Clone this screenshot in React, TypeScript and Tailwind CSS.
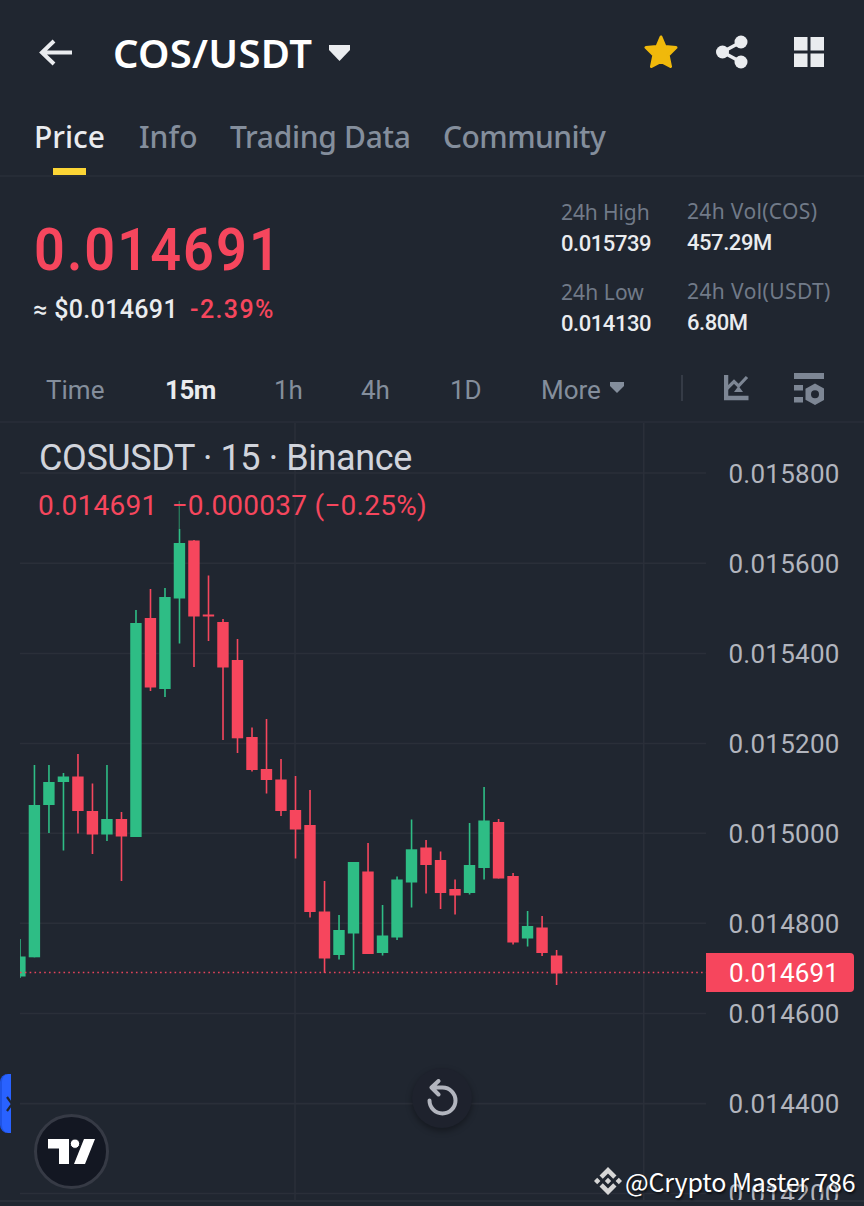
type Candle = { up: boolean; high: number; top: number; bottom: number; low: number };

const c = (up: boolean, high: number, top: number, bottom: number, low: number): Candle => ({ up, high, top, bottom, low });

const candles: Candle[] = [
  c(true, 939, 956.5, 976.5, 978),
  c(true, 765, 805, 957.3, 957.3),
  c(true, 765, 782, 805, 833),
  c(true, 773, 776.5, 782, 850.5),
  c(false, 754, 776.5, 811, 833.5),
  c(false, 783.5, 811, 834.5, 854),
  c(true, 765, 819, 834.5, 841),
  c(false, 812, 819, 836.5, 881),
  c(true, 610, 623, 837, 837),
  c(false, 589, 618, 687.5, 691),
  c(true, 588, 597, 689, 697),
  c(true, 529, 543, 598.5, 643.5),
  c(false, 540, 540.5, 616.5, 667),
  c(false, 575.5, 614.5, 616.5, 641),
  c(false, 619, 622, 667.5, 740),
  c(false, 639, 660, 738.3, 753),
  c(false, 727.5, 737, 770, 771.5),
  c(false, 719, 769, 780, 793.5),
  c(false, 759, 779.5, 811, 816),
  c(false, 776, 810, 829.5, 858.5),
  c(false, 790, 825, 912, 917.5),
  c(false, 881, 911.5, 958.5, 973),
  c(true, 915, 930, 955, 959.5),
  c(true, 862, 862, 933.5, 970),
  c(false, 843, 871.5, 954, 954),
  c(true, 905, 935.5, 953, 955.5),
  c(true, 876.5, 879.5, 937.5, 940),
  c(true, 819.5, 849.3, 882.5, 907.5),
  c(false, 840, 847.5, 865, 893.5),
  c(false, 851.5, 860, 893, 909),
  c(false, 879.5, 889, 895.5, 914.5),
  c(true, 823, 865, 893, 894.5),
  c(true, 787, 820.5, 868, 879.5),
  c(false, 819, 822, 878.5, 878.5),
  c(false, 873, 876, 942.5, 944.5),
  c(true, 911, 926, 938.5, 946.5),
  c(false, 916, 927.5, 953, 956),
  c(false, 950, 955.5, 973.5, 985),
];

const gridRows = [473, 563.3, 653.5, 743.5, 833.3, 923.3, 1013.5, 1103.6, 1193.5];
const axisLabels = ["0.015800", "0.015600", "0.015400", "0.015200", "0.015000", "0.014800", "0.014600", "0.014400", "0.014200"];

function Chart() {
  return (
    <svg className="block h-[785px] w-[706px]" viewBox="0 421 706 785">
      <g stroke="#2a2f39" strokeWidth="1.6">
        {gridRows.map((y) => (
          <line key={y} x1="20" x2="706" y1={y} y2={y} />
        ))}
        <line x1="295" x2="295" y1="421" y2="1200" />
        <line x1="643.7" x2="643.7" y1="421" y2="1200" />
      </g>
      <clipPath id="plot">
        <rect x="20" y="421" width="686" height="785" />
      </clipPath>
      <g clipPath="url(#plot)">
        <rect x="178.6" y="501" width="1.4" height="28" fill="#287358" />
        {candles.map((k, i) => {
          const x = 19.9 + i * 14.504;
          return (
            <g key={i} fill={k.up ? "#2ebd85" : "#f6465d"}>
              <rect x={x - 0.75} y={k.high} width="1.6" height={k.low - k.high} />
              <rect x={x - 5.7} y={k.top} width="11.4" height={k.bottom - k.top} />
            </g>
          );
        })}
      </g>
      <line x1="20" x2="706" y1="972.5" y2="972.5" stroke="#e8445b" strokeWidth="1.7" strokeDasharray="1.6 3.23" />
    </svg>
  );
}

function Header() {
  return (
    <header className="flex h-[105px] items-center pl-[39px] pr-[40px]">
      <svg className="h-[28px] w-[34px]" viewBox="0 0 34 28" fill="none" stroke="#eaecef" strokeWidth="4">
        <path d="M33 13.5H4M15 2 3 13.5 15 25" />
      </svg>
      <h1 className="ml-[40px] w-[202px] whitespace-nowrap font-['Noto_Sans',sans-serif] text-[40px] font-semibold leading-[48px] tracking-[0.3px] text-white">COS/USDT</h1>
      <svg className="ml-[14px] h-[16px] w-[21px]" viewBox="0 0 21 16" fill="#eaecef">
        <path d="M0 0h21v5L10.500 16 0 5z" />
      </svg>
      <div className="-mt-px ml-auto flex items-center">
        <svg className="h-[36px] w-[34px]" viewBox="0 0 34 36" fill="#f0b90b" stroke="#f0b90b" strokeWidth="3" strokeLinejoin="round">
          <path d="M17 3 21 12.500 32 13.500 24.200 21.300 26.500 32.500 17 27.500 7.500 32.500 9.800 21.300 2 13.500 13 12.500z" />
        </svg>
        <svg className="ml-[38px] h-[34px] w-[32px]" viewBox="0 0 32 34" fill="#eaecef">
          <path d="M6.500 17 25 7M6.500 17 25 27" stroke="#eaecef" strokeWidth="3.600" />
          <circle cx="6.500" cy="17" r="6.500" />
          <circle cx="25" cy="7" r="6.500" />
          <circle cx="25" cy="27" r="6.500" />
        </svg>
        <svg className="ml-[46px] h-[30px] w-[30px]" viewBox="0 0 30 30" fill="#eaecef">
          <path d="M0 0h13.500v13.500H0zM16.500 0H30v13.500H16.500zM0 16.500h13.500V30H0zM16.500 16.500H30V30H16.500z" />
        </svg>
      </div>
    </header>
  );
}

function Tabs() {
  return (
    <nav className="flex h-[72px] border-b-2 border-[#262c36] pl-[34px] pt-[2px] font-['Noto_Sans',sans-serif] text-[30px] font-medium leading-[60px] text-[#848e9c]">
      <div className="flex w-[105px] flex-col text-[#eaecef]">
        <span className="h-[62px] whitespace-nowrap">Price</span>
        <span className="ml-[19px] h-[7px] w-[33px] shrink-0 bg-[#fcd535]" />
      </div>
      <span className="w-[91px] whitespace-nowrap">Info</span>
      <span className="w-[213px] whitespace-nowrap tracking-[-0.3px]">Trading Data</span>
      <span className="whitespace-nowrap tracking-[-0.55px]">Community</span>
    </nav>
  );
}

function Stat({ label, value, labelClass }: { label: string; value: string; labelClass: string }) {
  return (
    <div className="h-[80px] whitespace-nowrap">
      <div className={`font-['Noto_Sans',sans-serif] text-[21px] leading-[32px] text-[#717a88] ${labelClass}`}>{label}</div>
      <div className="font-[Roboto,sans-serif] text-[22px] font-medium leading-[32px] tracking-[-0.45px] text-[#eaecef]">{value}</div>
    </div>
  );
}

function Summary() {
  return (
    <section className="flex h-[171px]">
      <div className="w-[561px] whitespace-nowrap pl-[33px] pt-[37px] font-[Roboto,sans-serif]">
        <div className="ml-px origin-left scale-x-90 text-[60px] font-semibold leading-[72px] tracking-[2.3px] text-[#f6465d]">0.014691</div>
        <div className="flex text-[25px] font-medium leading-[48px] text-[#eaecef]">
          <span className="w-[157px] tracking-[0.35px]">≈ $0.014691</span>
          <span className="tracking-[1.4px] text-[#f6465d]">-2.39%</span>
        </div>
      </div>
      <div className="w-[126px] pt-[19px]">
        <Stat label="24h High" value="0.015739" labelClass="tracking-[-0.1px]" />
        <Stat label="24h Low" value="0.014130" labelClass="tracking-[0.1px]" />
      </div>
      <div className="pt-[18px]">
        <Stat label="24h Vol(COS)" value="457.29M" labelClass="tracking-[0.35px]" />
        <Stat label="24h Vol(USDT)" value="6.80M" labelClass="tracking-[0.4px]" />
      </div>
    </section>
  );
}

function Intervals() {
  return (
    <section className="flex h-[73px] pl-[46px] font-[Roboto,sans-serif] text-[26px] leading-[84px] text-[#848e9c]">
      <span className="w-[119px]">Time</span>
      <span className="w-[109px] font-bold tracking-[-0.5px] text-[#eaecef]">15m</span>
      <span className="w-[87px]">1h</span>
      <span className="w-[89px]">4h</span>
      <span className="w-[91px]">1D</span>
      <span className="w-[69px]">More</span>
      <svg className="mt-[34px] h-[11px] w-[14px]" viewBox="0 0 14 11" fill="#848e9c">
        <path d="M0 0h14v4L7 11 0 4z" />
      </svg>
      <span className="ml-[57px] mt-[27px] h-[26px] w-[2px] bg-[#353b46]" />
      <svg className="ml-[41px] mt-[27px] h-[26px] w-[25px]" viewBox="0 0 25 26" fill="none" stroke="#7d8694">
        <path d="M2 0v23h22.500" strokeWidth="4.500" />
        <path d="M3 13.500 10 6.500l4.500 4.500L23 2" strokeWidth="3.200" />
        <path d="m14.500 11 4.500 6h-9z" fill="#7d8694" stroke="none" />
      </svg>
      <svg className="ml-[45px] mt-[25px] h-[32px] w-[30px]" viewBox="0 0 30 32" fill="#7d8694">
        <path d="M0 0h30v6H0zM0 12h9v5.500H0zM0 24h9v5.500H0z" />
        <path fillRule="evenodd" d="m21 10.500 9.500 5.200v11L21 32l-9.500-5.300v-11zM21 17.200a4 4 0 1 0 0 8 4 4 0 0 0 0-8z" />
      </svg>
    </section>
  );
}

export default function App() {
  return (
    <main className="h-[1206px] w-[864px] overflow-hidden bg-[#202630]">
      <Header />
      <Tabs />
      <Summary />
      <Intervals />
      <section className="relative flex h-[785px] font-[Roboto,sans-serif]">
        <Chart />
        <div className="absolute left-0 top-0 h-[2px] w-full bg-[#262b36]" />
        <div className="h-[779px] w-[158px] overflow-hidden pl-[22.500px] pt-[8px] text-[26px] tracking-[0.25px] text-[#b2b5be]">
          {axisLabels.map((label) => (
            <div key={label} className="h-[90px] leading-[90px]">{label}</div>
          ))}
        </div>
        <div className="absolute left-[706px] top-[532px] h-[39px] w-[148px] rounded-r-[4px] bg-[#f6465d] pl-[23px] text-[26px] leading-[40px] tracking-[0.1px] text-white">0.014691</div>
        <div className="absolute left-[39px] top-[15px] whitespace-nowrap text-[36px] leading-[44px] tracking-[-0.4px] text-[#d1d4dc]">COSUSDT · 15 · Binance</div>
        <div className="absolute left-[38px] top-[67px] flex whitespace-nowrap text-[28px] leading-[36px] tracking-[0.25px] text-[#f6465d]">
          <span className="w-[133.500px]">0.014691</span>
          <span>−0.000037 (−0.25%)</span>
        </div>
        <div className="absolute left-0 top-[653px] flex h-[59px] w-[11px] items-center overflow-hidden rounded-l-[8px] border-l-2 border-[#1e53e5] bg-[#2962ff]">
          <svg className="ml-[4px] h-[16px] w-[8px] shrink-0" viewBox="0 0 8 16" fill="none" stroke="#202630" strokeWidth="2.200">
            <path d="M1 1 6 8 1 15" />
          </svg>
        </div>
        <div className="absolute left-[34px] top-[693px] flex h-[75px] w-[75px] items-center justify-center rounded-full border-[3px] border-[#363a45] bg-[#131722]">
          <svg className="h-[25px] w-[47px]" viewBox="0 0 47 25" fill="#fff">
            <path d="M0 0h21v25H11V9.500H0zM36 0h11L37 25H26z" />
            <circle cx="27" cy="4.700" r="4.700" stroke="#131722" strokeWidth="1" />
          </svg>
        </div>
        <div className="absolute left-[412px] top-[647px] flex h-[60px] w-[60px] items-center justify-center rounded-full bg-[#1e222d] shadow-[0_3px_6px_rgba(0,0,0,0.35)]">
          <svg className="h-[38px] w-[32px]" viewBox="0 0 32 38" fill="none" stroke="#b2b5be" strokeWidth="4" strokeLinecap="round" strokeLinejoin="round">
            <path d="M3.500 21.500a13 13 0 1 0 13-13H6M12.500 2 5.500 8.500l7 7" />
          </svg>
        </div>
        <div className="absolute bottom-0 left-0 h-[6px] w-full border-t-2 border-[#2a2f39] bg-[#202630]" />
        <div className="absolute left-[594px] top-[741px] flex items-center whitespace-nowrap font-['Noto_Sans_CJK_SC',sans-serif] text-[25px] leading-[38px] tracking-[-0.15px] text-white [text-shadow:1px_2px_2px_rgba(0,0,0,0.6)]">
          <svg className="mr-[3px] h-[28px] w-[28px]" viewBox="0 0 28 28" fill="#d6d6d6">
            <path d="m14 0 8.500 8.500-3.300 3.300L14 6.600l-5.200 5.200-3.300-3.300zM14 28l8.500-8.500-3.300-3.300L14 21.400l-5.200-5.200-3.300 3.300zM3.200 10.800 6.400 14l-3.200 3.200L0 14zM24.800 10.800 28 14l-3.200 3.200-3.200-3.200zM14 10.800l3.200 3.200-3.200 3.200-3.200-3.200z" />
          </svg>
          @Crypto Master 786
        </div>
      </section>
    </main>
  );
}
